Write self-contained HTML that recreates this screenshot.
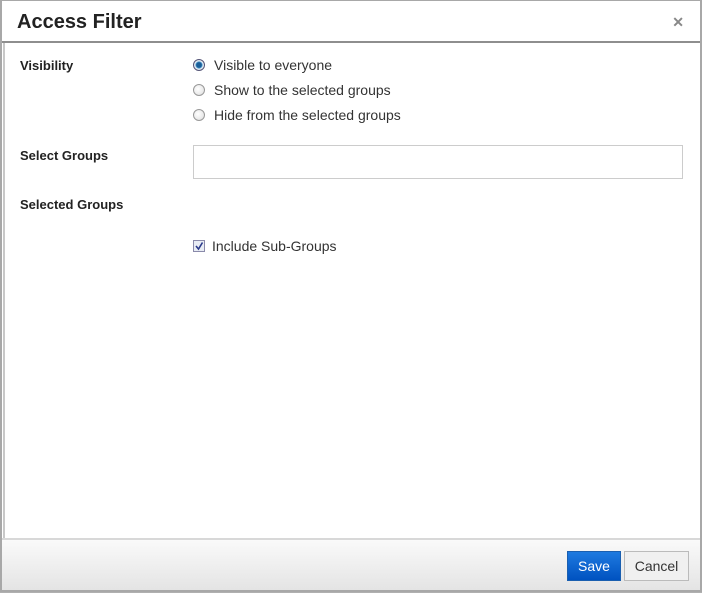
<!DOCTYPE html>
<html><head><style>
*{margin:0;padding:0;box-sizing:border-box}
body{width:702px;height:593px;background:#b0b0b0;font-family:"Liberation Sans",Arial,sans-serif;position:relative;overflow:hidden}
.dlg{position:absolute;left:0;top:0;width:702px;height:592px;background:#fff;border:2px solid #a8a8a8;border-top:1px solid #a8a8a8}
.hdr{position:absolute;left:0;top:0;right:0;height:42px;border-bottom:2px solid #8e8e8e;background:#fff}
.hdr h1{position:absolute;left:15px;top:10px;font-size:20px;font-weight:bold;color:#222}
.x{position:absolute;right:16px;top:13px;font-size:14px;font-weight:bold;color:#888}
.body{position:absolute;left:1px;top:42px;right:0;bottom:52px;border-left:2px solid #c8c8c8;background:#fff}
.lbl{position:absolute;left:15px;font-size:13px;font-weight:bold;color:#222}
.opt{position:absolute;left:188px;font-size:14px;color:#333}
.rad{display:inline-block;width:12px;height:12px;border-radius:50%;border:1px solid #999;background:radial-gradient(circle at 40% 40%,#fff,#ddd);vertical-align:-1px;margin-right:9px}
.rad.on{background:radial-gradient(circle,#1a5f99 0 2.5px,#5aa0d0 3.2px,#e8f0f8 4px,#ddd 6px);border-color:#557}
.inp{position:absolute;left:188px;top:102px;width:490px;height:34px;border:1px solid #ccc}
.chk{display:inline-block;width:12px;height:12px;border:1px solid #8a8aaa;background:#e8ecf4;vertical-align:-1px;margin-right:7px;position:relative}
.ftr{position:absolute;left:0;right:0;bottom:0;height:52px;background:linear-gradient(#fafafa,#e4e4e4);border-top:2px solid #d8d8d8}
.btn{position:absolute;top:11px;height:30px;font-size:14px;line-height:28px;text-align:center}
.save{left:565px;width:54px;background:linear-gradient(#1e7ae0,#0052c0);color:#fff;border:1px solid #1a5fb0}
.cancel{left:622px;width:65px;background:#f0f0f0;color:#333;border:1px solid #bbb}
</style></head><body>
<div class="dlg">
<div class="hdr"><h1>Access Filter</h1><div class="x">✕</div></div>
<div class="body">
<div class="lbl" style="top:15px">Visibility</div>
<div class="opt" style="top:14px"><span class="rad on"></span>Visible to everyone</div>
<div class="opt" style="top:39px"><span class="rad"></span>Show to the selected groups</div>
<div class="opt" style="top:64px"><span class="rad"></span>Hide from the selected groups</div>
<div class="lbl" style="top:105px">Select Groups</div>
<div class="inp"></div>
<div class="lbl" style="top:154px">Selected Groups</div>
<div class="opt" style="top:195px"><span class="chk"><svg width="10" height="10" style="position:absolute;left:0;top:0"><path d="M2 5 L4.5 8 L8.5 1.5" stroke="#2a3a8a" stroke-width="1.6" fill="none"/></svg></span>Include Sub-Groups</div>
</div>
<div class="ftr"><div class="btn save">Save</div><div class="btn cancel">Cancel</div></div>
</div>
</body></html>
